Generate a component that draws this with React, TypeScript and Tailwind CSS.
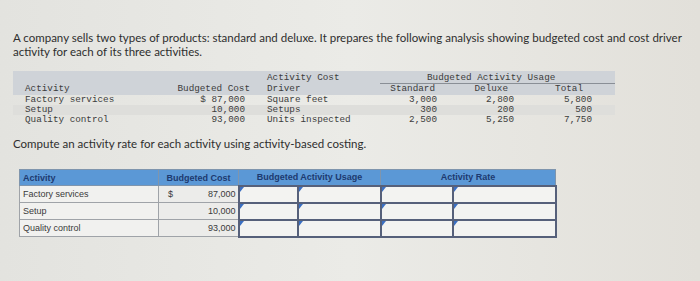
import React from "react";

const mono = "font-['Liberation_Mono',monospace]";

function Flag() {
  return (
    <span className="absolute left-0 top-0 w-0 h-0 border-t-[5px] border-t-[#3b6fc2] border-r-[4px] border-r-transparent" />
  );
}

function InputCell() {
  return (
    <td className="relative border-2 border-[#56607a] bg-[#f3f3f1] p-0">
      <Flag />
    </td>
  );
}

export default function App() {
  const rows = [
    { a: "Factory services", dollar: "$", cost: "87,000" },
    { a: "Setup", dollar: "", cost: "10,000" },
    { a: "Quality control", dollar: "", cost: "93,000" },
  ];
  return (
    <div className="w-[700px] h-[281px] overflow-hidden bg-gradient-to-r from-[#e3e3df] via-[#ebebe7] to-[#e2e0da] text-[#2c2c2c]">
      <div className="pt-[31px] pl-[13px]">
        <p className="font-['Lato',sans-serif] text-[11.5px] leading-[14px] text-[#2e2e2e]">
          A company sells two types of products: standard and deluxe. It prepares the following analysis showing budgeted cost and cost driver
          <br />
          activity for each of its three activities.
        </p>

        <div className={`mt-[12px] w-[602px] ${mono} text-[9.3px] leading-[10px] text-[#3c3c3c] whitespace-nowrap`}>
          <div className="bg-[#cfd3d8] pt-[2px] pb-[1px] grid grid-cols-[167px_75px_125px_60px_80px_95px]">
            <div />
            <div />
            <div className="pl-[12px]">Activity Cost</div>
            <div className="col-span-3 border-b border-[#8a8f96] pl-[47px]">Budgeted Activity Usage</div>
            <div className="pl-[12px]">Activity</div>
            <div className="text-right pr-[5px] overflow-visible flex justify-end">
              <span>Budgeted Cost</span>
            </div>
            <div className="pl-[12px]">Driver</div>
            <div className="text-right pr-[5px]">Standard</div>
            <div className="text-right pr-[12px]">Deluxe</div>
            <div className="text-right pr-[32px]">Total</div>
          </div>
          {[
            ["Factory services", "$ 87,000", "Square feet", "3,000", "2,800", "5,800"],
            ["Setup", "10,000", "Setups", "300", "200", "500"],
            ["Quality control", "93,000", "Units inspected", "2,500", "5,250", "7,750"],
          ].map((r, i) => (
            <div
              key={i}
              className={`grid grid-cols-[167px_75px_125px_60px_80px_95px] h-[10px] ${i === 1 ? "bg-[#dededb]" : ""}`}
            >
              <div className="pl-[12px] whitespace-pre">{r[0]}</div>
              <div className="text-right pr-[10px] whitespace-pre">{r[1]}</div>
              <div className="pl-[12px] whitespace-pre">{r[2]}</div>
              <div className="text-right pr-[3px]">{r[3]}</div>
              <div className="text-right pr-[6px]">{r[4]}</div>
              <div className="text-right pr-[23px]">{r[5]}</div>
            </div>
          ))}
        </div>

        <p className="mt-[12px] font-['Lato',sans-serif] text-[11.5px] leading-[14px] text-[#2e2e2e]">
          Compute an activity rate for each activity using activity-based costing.
        </p>
      </div>

      <table className="mt-[18px] ml-[19px] w-[536px] table-fixed border-collapse font-['Liberation_Sans',Arial,sans-serif] text-[9px] leading-[10px]">
        <colgroup>
          <col className="w-[139px]" />
          <col className="w-[80px]" />
          <col className="w-[59px]" />
          <col className="w-[83px]" />
          <col className="w-[72px]" />
          <col className="w-[103px]" />
        </colgroup>
        <thead>
          <tr className="h-[16px] bg-[#5b98d6] text-[#1d3a70] font-bold">
            <th className="border border-[#7f95ad] text-left pl-[3px] font-bold">Activity</th>
            <th className="border border-[#7f95ad] text-center font-bold">Budgeted Cost</th>
            <th colSpan={2} className="border border-[#7f95ad] text-center font-bold">Budgeted Activity Usage</th>
            <th colSpan={2} className="border border-[#7f95ad] text-center font-bold">Activity Rate</th>
          </tr>
        </thead>
        <tbody>
          {rows.map((r, i) => (
            <tr key={i} className="h-[17px]">
              <td className="border border-[#9fa3a8] bg-[#f1f1ef] pl-[3px] text-[#3a3a3a]">{r.a}</td>
              <td className="border border-[#9fa3a8] bg-[#ececea] text-[#3a3a3a] p-0">
                <div className="flex justify-between pl-[9px] pr-[2px]">
                  <span>{r.dollar}</span>
                  <span>{r.cost}</span>
                </div>
              </td>
              <InputCell />
              <InputCell />
              <InputCell />
              <InputCell />
            </tr>
          ))}
        </tbody>
      </table>
    </div>
  );
}
